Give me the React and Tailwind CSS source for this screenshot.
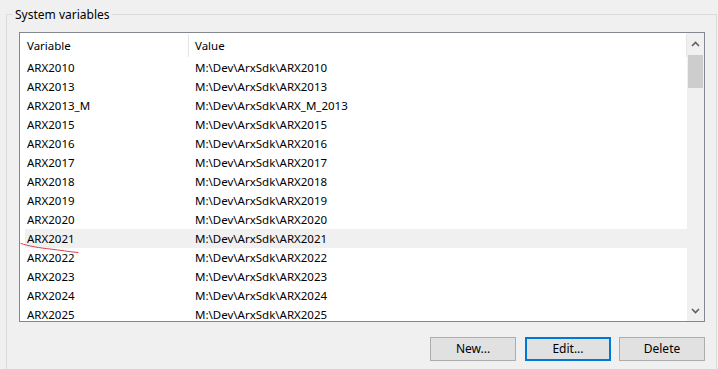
import React from "react";

const rows = [
  ["ARX2010", "M:\\Dev\\ArxSdk\\ARX2010"],
  ["ARX2013", "M:\\Dev\\ArxSdk\\ARX2013"],
  ["ARX2013_M", "M:\\Dev\\ArxSdk\\ARX_M_2013"],
  ["ARX2015", "M:\\Dev\\ArxSdk\\ARX2015"],
  ["ARX2016", "M:\\Dev\\ArxSdk\\ARX2016"],
  ["ARX2017", "M:\\Dev\\ArxSdk\\ARX2017"],
  ["ARX2018", "M:\\Dev\\ArxSdk\\ARX2018"],
  ["ARX2019", "M:\\Dev\\ArxSdk\\ARX2019"],
  ["ARX2020", "M:\\Dev\\ArxSdk\\ARX2020"],
  ["ARX2021", "M:\\Dev\\ArxSdk\\ARX2021"],
  ["ARX2022", "M:\\Dev\\ArxSdk\\ARX2022"],
  ["ARX2023", "M:\\Dev\\ArxSdk\\ARX2023"],
  ["ARX2024", "M:\\Dev\\ArxSdk\\ARX2024"],
  ["ARX2025", "M:\\Dev\\ArxSdk\\ARX2025"],
];

function Chevron({ down }) {
  return (
    <svg width="9" height="6" viewBox="0 0 9 6" className="block">
      <path
        d={down ? "M1 1 L4.5 4.5 L8 1" : "M1 5 L4.5 1.5 L8 5"}
        fill="none"
        stroke="#606060"
        strokeWidth="1.6"
      />
    </svg>
  );
}

function Btn({ children, focused }) {
  return (
    <div
      className={
        "w-[86px] h-[24px] flex items-center justify-center bg-[#e1e1e1] text-black " +
        (focused ? "border-2 border-[#0078d7]" : "border border-[#adadad]")
      }
    >
      {children}
    </div>
  );
}

export default function App() {
  return (
    <div
      className="relative w-[718px] h-[369px] overflow-hidden bg-[#f0f0f0] text-[11.5px] leading-none text-black"
      style={{ fontFamily: '"Noto Sans", "Open Sans", sans-serif' }}
    >
      <div className="pt-[14px] pl-[6px]">
        <div className="relative w-[711px] h-[400px] border border-[#dcdcdc]">
          <div className="absolute left-[6px] top-[-8px] px-[2px] bg-[#f0f0f0] leading-[16px] text-[12px]">
            System variables
          </div>
          <div className="pl-[12px] pt-[17px]">
            <div className="w-[686px] h-[290px] border border-[#828790] bg-white flex">
              <div className="flex-1 overflow-hidden">
                <div className="h-[25px] flex items-center pl-[5px]">
                  <div className="w-[163px] pl-[2px]">Variable</div>
                  <div className="w-px h-[23px] bg-[#e5e5e5]" />
                  <div className="flex-1 pl-[6px]">Value</div>
                  <div className="w-px h-[23px] bg-[#e5e5e5]" />
                </div>
                <div className="pl-[5px]">
                  {rows.map(([k, v], i) => (
                    <div
                      key={k}
                      className={
                        "h-[19px] flex items-center " +
                        (i === 9 ? "bg-[#f0f0f0]" : "")
                      }
                    >
                      <div className="w-[163px] pl-[2px]">{k}</div>
                      <div className="flex-1 pl-[7px]">{v}</div>
                    </div>
                  ))}
                </div>
              </div>
              <div className="w-[17px] bg-[#f0f0f0] flex flex-col items-center">
                <div className="h-[22px] w-full flex items-center justify-center">
                  <Chevron />
                </div>
                <div className="w-[15px] h-[33px] bg-[#cdcdcd]" />
                <div className="flex-1" />
                <div className="h-[20px] w-full flex items-center justify-center">
                  <Chevron down />
                </div>
              </div>
            </div>
            <div className="w-[686px] flex justify-end mt-[15px] text-[12px]">
              <Btn>New...</Btn>
              <div className="w-[9px]" />
              <Btn focused>Edit...</Btn>
              <div className="w-[8px]" />
              <Btn>Delete</Btn>
            </div>
          </div>
        </div>
      </div>
      <svg
        className="absolute left-0 top-0 pointer-events-none"
        width="718"
        height="369"
      >
        <path
          d="M20.5 243.3 C 28 246, 40 248, 50 249 S 70 252, 78.5 252.5"
          fill="none"
          stroke="#e0404a"
          strokeWidth="1"
        />
      </svg>
    </div>
  );
}
